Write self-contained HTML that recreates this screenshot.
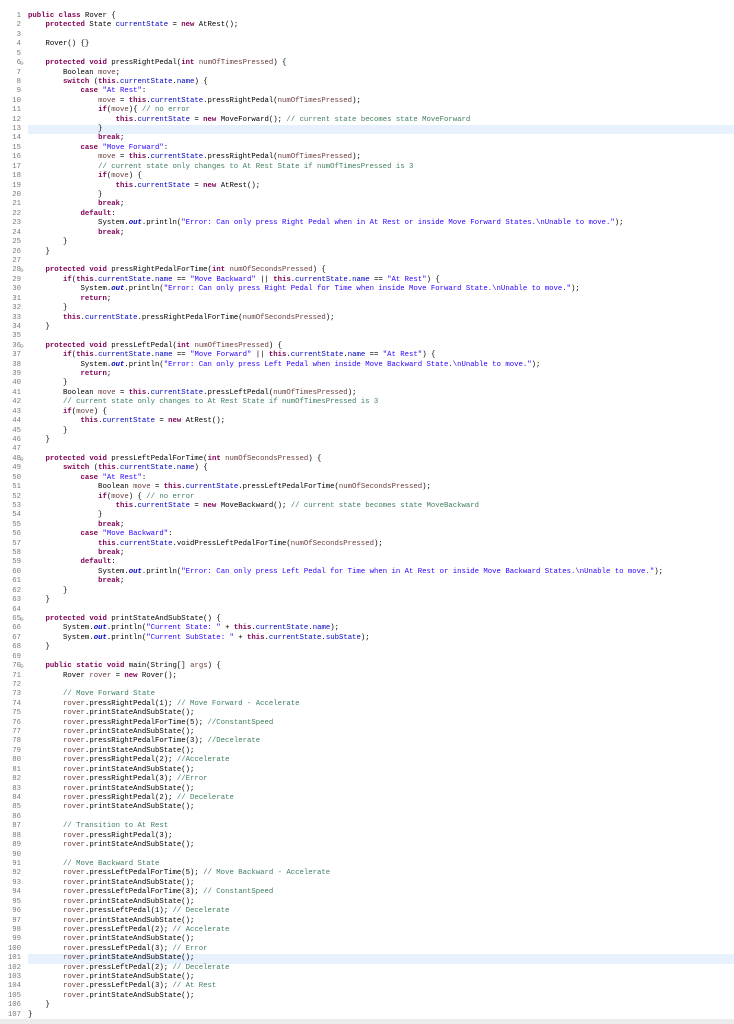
<!DOCTYPE html>
<html><head><meta charset="utf-8"><style>
html,body{margin:0;padding:0;background:#fff;width:734px;height:1024px;overflow:hidden}
#c{position:absolute;top:12px;left:0;width:734px;font-family:"Liberation Mono",monospace;font-size:7.3px;line-height:9.43px;color:#000}
.l{position:relative;height:9.43px;white-space:pre}
.n{position:absolute;left:0;width:21px;text-align:right;color:#787878}
.t{position:absolute;left:28px}
.h{background:#e8f2fe;left:28px;right:0;position:absolute;top:0;bottom:0}
.k{color:#7f0055;font-weight:bold}
.s{color:#2a00ff}
.c{color:#3f7f5f}
.f{color:#0000c0}
.fi{color:#0000c0;font-style:italic;font-weight:bold}
.v{color:#6a3e3e}
.fo{position:absolute;left:20px;color:#888;font-size:6px}
#bot{position:absolute;left:0;right:0;top:1019px;height:5px;background:#ececec}
</style></head><body><div id="c">
<div class="l"><span class="n">1</span><span class="t"><span class="k">public</span> <span class="k">class</span> Rover {</span></div>
<div class="l"><span class="n">2</span><span class="t">    <span class="k">protected</span> State <span class="f">currentState</span> = <span class="k">new</span> AtRest();</span></div>
<div class="l"><span class="n">3</span></div>
<div class="l"><span class="n">4</span><span class="t">    Rover() {}</span></div>
<div class="l"><span class="n">5</span></div>
<div class="l"><span class="n">6</span><span class="fo">⊖</span><span class="t">    <span class="k">protected</span> <span class="k">void</span> pressRightPedal(<span class="k">int</span> <span class="v">numOfTimesPressed</span>) {</span></div>
<div class="l"><span class="n">7</span><span class="t">        Boolean <span class="v">move</span>;</span></div>
<div class="l"><span class="n">8</span><span class="t">        <span class="k">switch</span> (<span class="k">this</span>.<span class="f">currentState</span>.<span class="f">name</span>) {</span></div>
<div class="l"><span class="n">9</span><span class="t">            <span class="k">case</span> <span class="s">"At Rest"</span>:</span></div>
<div class="l"><span class="n">10</span><span class="t">                <span class="v">move</span> = <span class="k">this</span>.<span class="f">currentState</span>.pressRightPedal(<span class="v">numOfTimesPressed</span>);</span></div>
<div class="l"><span class="n">11</span><span class="t">                <span class="k">if</span>(<span class="v">move</span>){ <span class="c">// no error</span></span></div>
<div class="l"><span class="n">12</span><span class="t">                    <span class="k">this</span>.<span class="f">currentState</span> = <span class="k">new</span> MoveForward(); <span class="c">// current state becomes state MoveForward</span></span></div>
<div class="l"><span class="h"></span><span class="n">13</span><span class="t">                }</span></div>
<div class="l"><span class="n">14</span><span class="t">                <span class="k">break</span>;</span></div>
<div class="l"><span class="n">15</span><span class="t">            <span class="k">case</span> <span class="s">"Move Forward"</span>:</span></div>
<div class="l"><span class="n">16</span><span class="t">                <span class="v">move</span> = <span class="k">this</span>.<span class="f">currentState</span>.pressRightPedal(<span class="v">numOfTimesPressed</span>);</span></div>
<div class="l"><span class="n">17</span><span class="t">                <span class="c">// current state only changes to At Rest State if numOfTimesPressed is 3</span></span></div>
<div class="l"><span class="n">18</span><span class="t">                <span class="k">if</span>(<span class="v">move</span>) {</span></div>
<div class="l"><span class="n">19</span><span class="t">                    <span class="k">this</span>.<span class="f">currentState</span> = <span class="k">new</span> AtRest();</span></div>
<div class="l"><span class="n">20</span><span class="t">                }</span></div>
<div class="l"><span class="n">21</span><span class="t">                <span class="k">break</span>;</span></div>
<div class="l"><span class="n">22</span><span class="t">            <span class="k">default</span>:</span></div>
<div class="l"><span class="n">23</span><span class="t">                System.<span class="fi">out</span>.println(<span class="s">"Error: Can only press Right Pedal when in At Rest or inside Move Forward States.\nUnable to move."</span>);</span></div>
<div class="l"><span class="n">24</span><span class="t">                <span class="k">break</span>;</span></div>
<div class="l"><span class="n">25</span><span class="t">        }</span></div>
<div class="l"><span class="n">26</span><span class="t">    }</span></div>
<div class="l"><span class="n">27</span></div>
<div class="l"><span class="n">28</span><span class="fo">⊖</span><span class="t">    <span class="k">protected</span> <span class="k">void</span> pressRightPedalForTime(<span class="k">int</span> <span class="v">numOfSecondsPressed</span>) {</span></div>
<div class="l"><span class="n">29</span><span class="t">        <span class="k">if</span>(<span class="k">this</span>.<span class="f">currentState</span>.<span class="f">name</span> == <span class="s">"Move Backward"</span> || <span class="k">this</span>.<span class="f">currentState</span>.<span class="f">name</span> == <span class="s">"At Rest"</span>) {</span></div>
<div class="l"><span class="n">30</span><span class="t">            System.<span class="fi">out</span>.println(<span class="s">"Error: Can only press Right Pedal for Time when inside Move Forward State.\nUnable to move."</span>);</span></div>
<div class="l"><span class="n">31</span><span class="t">            <span class="k">return</span>;</span></div>
<div class="l"><span class="n">32</span><span class="t">        }</span></div>
<div class="l"><span class="n">33</span><span class="t">        <span class="k">this</span>.<span class="f">currentState</span>.pressRightPedalForTime(<span class="v">numOfSecondsPressed</span>);</span></div>
<div class="l"><span class="n">34</span><span class="t">    }</span></div>
<div class="l"><span class="n">35</span></div>
<div class="l"><span class="n">36</span><span class="fo">⊖</span><span class="t">    <span class="k">protected</span> <span class="k">void</span> pressLeftPedal(<span class="k">int</span> <span class="v">numOfTimesPressed</span>) {</span></div>
<div class="l"><span class="n">37</span><span class="t">        <span class="k">if</span>(<span class="k">this</span>.<span class="f">currentState</span>.<span class="f">name</span> == <span class="s">"Move Forward"</span> || <span class="k">this</span>.<span class="f">currentState</span>.<span class="f">name</span> == <span class="s">"At Rest"</span>) {</span></div>
<div class="l"><span class="n">38</span><span class="t">            System.<span class="fi">out</span>.println(<span class="s">"Error: Can only press Left Pedal when inside Move Backward State.\nUnable to move."</span>);</span></div>
<div class="l"><span class="n">39</span><span class="t">            <span class="k">return</span>;</span></div>
<div class="l"><span class="n">40</span><span class="t">        }</span></div>
<div class="l"><span class="n">41</span><span class="t">        Boolean <span class="v">move</span> = <span class="k">this</span>.<span class="f">currentState</span>.pressLeftPedal(<span class="v">numOfTimesPressed</span>);</span></div>
<div class="l"><span class="n">42</span><span class="t">        <span class="c">// current state only changes to At Rest State if numOfTimesPressed is 3</span></span></div>
<div class="l"><span class="n">43</span><span class="t">        <span class="k">if</span>(<span class="v">move</span>) {</span></div>
<div class="l"><span class="n">44</span><span class="t">            <span class="k">this</span>.<span class="f">currentState</span> = <span class="k">new</span> AtRest();</span></div>
<div class="l"><span class="n">45</span><span class="t">        }</span></div>
<div class="l"><span class="n">46</span><span class="t">    }</span></div>
<div class="l"><span class="n">47</span></div>
<div class="l"><span class="n">48</span><span class="fo">⊖</span><span class="t">    <span class="k">protected</span> <span class="k">void</span> pressLeftPedalForTime(<span class="k">int</span> <span class="v">numOfSecondsPressed</span>) {</span></div>
<div class="l"><span class="n">49</span><span class="t">        <span class="k">switch</span> (<span class="k">this</span>.<span class="f">currentState</span>.<span class="f">name</span>) {</span></div>
<div class="l"><span class="n">50</span><span class="t">            <span class="k">case</span> <span class="s">"At Rest"</span>:</span></div>
<div class="l"><span class="n">51</span><span class="t">                Boolean <span class="v">move</span> = <span class="k">this</span>.<span class="f">currentState</span>.pressLeftPedalForTime(<span class="v">numOfSecondsPressed</span>);</span></div>
<div class="l"><span class="n">52</span><span class="t">                <span class="k">if</span>(<span class="v">move</span>) { <span class="c">// no error</span></span></div>
<div class="l"><span class="n">53</span><span class="t">                    <span class="k">this</span>.<span class="f">currentState</span> = <span class="k">new</span> MoveBackward(); <span class="c">// current state becomes state MoveBackward</span></span></div>
<div class="l"><span class="n">54</span><span class="t">                }</span></div>
<div class="l"><span class="n">55</span><span class="t">                <span class="k">break</span>;</span></div>
<div class="l"><span class="n">56</span><span class="t">            <span class="k">case</span> <span class="s">"Move Backward"</span>:</span></div>
<div class="l"><span class="n">57</span><span class="t">                <span class="k">this</span>.<span class="f">currentState</span>.voidPressLeftPedalForTime(<span class="v">numOfSecondsPressed</span>);</span></div>
<div class="l"><span class="n">58</span><span class="t">                <span class="k">break</span>;</span></div>
<div class="l"><span class="n">59</span><span class="t">            <span class="k">default</span>:</span></div>
<div class="l"><span class="n">60</span><span class="t">                System.<span class="fi">out</span>.println(<span class="s">"Error: Can only press Left Pedal for Time when in At Rest or inside Move Backward States.\nUnable to move."</span>);</span></div>
<div class="l"><span class="n">61</span><span class="t">                <span class="k">break</span>;</span></div>
<div class="l"><span class="n">62</span><span class="t">        }</span></div>
<div class="l"><span class="n">63</span><span class="t">    }</span></div>
<div class="l"><span class="n">64</span></div>
<div class="l"><span class="n">65</span><span class="fo">⊖</span><span class="t">    <span class="k">protected</span> <span class="k">void</span> printStateAndSubState() {</span></div>
<div class="l"><span class="n">66</span><span class="t">        System.<span class="fi">out</span>.println(<span class="s">"Current State: "</span> + <span class="k">this</span>.<span class="f">currentState</span>.<span class="f">name</span>);</span></div>
<div class="l"><span class="n">67</span><span class="t">        System.<span class="fi">out</span>.println(<span class="s">"Current SubState: "</span> + <span class="k">this</span>.<span class="f">currentState</span>.<span class="f">subState</span>);</span></div>
<div class="l"><span class="n">68</span><span class="t">    }</span></div>
<div class="l"><span class="n">69</span></div>
<div class="l"><span class="n">70</span><span class="fo">⊖</span><span class="t">    <span class="k">public</span> <span class="k">static</span> <span class="k">void</span> main(String[] <span class="v">args</span>) {</span></div>
<div class="l"><span class="n">71</span><span class="t">        Rover <span class="v">rover</span> = <span class="k">new</span> Rover();</span></div>
<div class="l"><span class="n">72</span></div>
<div class="l"><span class="n">73</span><span class="t">        <span class="c">// Move Forward State</span></span></div>
<div class="l"><span class="n">74</span><span class="t">        <span class="v">rover</span>.pressRightPedal(1); <span class="c">// Move Forward - Accelerate</span></span></div>
<div class="l"><span class="n">75</span><span class="t">        <span class="v">rover</span>.printStateAndSubState();</span></div>
<div class="l"><span class="n">76</span><span class="t">        <span class="v">rover</span>.pressRightPedalForTime(5); <span class="c">//ConstantSpeed</span></span></div>
<div class="l"><span class="n">77</span><span class="t">        <span class="v">rover</span>.printStateAndSubState();</span></div>
<div class="l"><span class="n">78</span><span class="t">        <span class="v">rover</span>.pressRightPedalForTime(3); <span class="c">//Decelerate</span></span></div>
<div class="l"><span class="n">79</span><span class="t">        <span class="v">rover</span>.printStateAndSubState();</span></div>
<div class="l"><span class="n">80</span><span class="t">        <span class="v">rover</span>.pressRightPedal(2); <span class="c">//Accelerate</span></span></div>
<div class="l"><span class="n">81</span><span class="t">        <span class="v">rover</span>.printStateAndSubState();</span></div>
<div class="l"><span class="n">82</span><span class="t">        <span class="v">rover</span>.pressRightPedal(3); <span class="c">//Error</span></span></div>
<div class="l"><span class="n">83</span><span class="t">        <span class="v">rover</span>.printStateAndSubState();</span></div>
<div class="l"><span class="n">84</span><span class="t">        <span class="v">rover</span>.pressRightPedal(2); <span class="c">// Decelerate</span></span></div>
<div class="l"><span class="n">85</span><span class="t">        <span class="v">rover</span>.printStateAndSubState();</span></div>
<div class="l"><span class="n">86</span></div>
<div class="l"><span class="n">87</span><span class="t">        <span class="c">// Transition to At Rest</span></span></div>
<div class="l"><span class="n">88</span><span class="t">        <span class="v">rover</span>.pressRightPedal(3);</span></div>
<div class="l"><span class="n">89</span><span class="t">        <span class="v">rover</span>.printStateAndSubState();</span></div>
<div class="l"><span class="n">90</span></div>
<div class="l"><span class="n">91</span><span class="t">        <span class="c">// Move Backward State</span></span></div>
<div class="l"><span class="n">92</span><span class="t">        <span class="v">rover</span>.pressLeftPedalForTime(5); <span class="c">// Move Backward - Accelerate</span></span></div>
<div class="l"><span class="n">93</span><span class="t">        <span class="v">rover</span>.printStateAndSubState();</span></div>
<div class="l"><span class="n">94</span><span class="t">        <span class="v">rover</span>.pressLeftPedalForTime(3); <span class="c">// ConstantSpeed</span></span></div>
<div class="l"><span class="n">95</span><span class="t">        <span class="v">rover</span>.printStateAndSubState();</span></div>
<div class="l"><span class="n">96</span><span class="t">        <span class="v">rover</span>.pressLeftPedal(1); <span class="c">// Decelerate</span></span></div>
<div class="l"><span class="n">97</span><span class="t">        <span class="v">rover</span>.printStateAndSubState();</span></div>
<div class="l"><span class="n">98</span><span class="t">        <span class="v">rover</span>.pressLeftPedal(2); <span class="c">// Accelerate</span></span></div>
<div class="l"><span class="n">99</span><span class="t">        <span class="v">rover</span>.printStateAndSubState();</span></div>
<div class="l"><span class="n">100</span><span class="t">        <span class="v">rover</span>.pressLeftPedal(3); <span class="c">// Error</span></span></div>
<div class="l"><span class="h"></span><span class="n">101</span><span class="t">        <span class="v">rover</span>.printStateAndSubState();</span></div>
<div class="l"><span class="n">102</span><span class="t">        <span class="v">rover</span>.pressLeftPedal(2); <span class="c">// Decelerate</span></span></div>
<div class="l"><span class="n">103</span><span class="t">        <span class="v">rover</span>.printStateAndSubState();</span></div>
<div class="l"><span class="n">104</span><span class="t">        <span class="v">rover</span>.pressLeftPedal(3); <span class="c">// At Rest</span></span></div>
<div class="l"><span class="n">105</span><span class="t">        <span class="v">rover</span>.printStateAndSubState();</span></div>
<div class="l"><span class="n">106</span><span class="t">    }</span></div>
<div class="l"><span class="n">107</span><span class="t">}</span></div>
</div><div id="bot"></div></body></html>
